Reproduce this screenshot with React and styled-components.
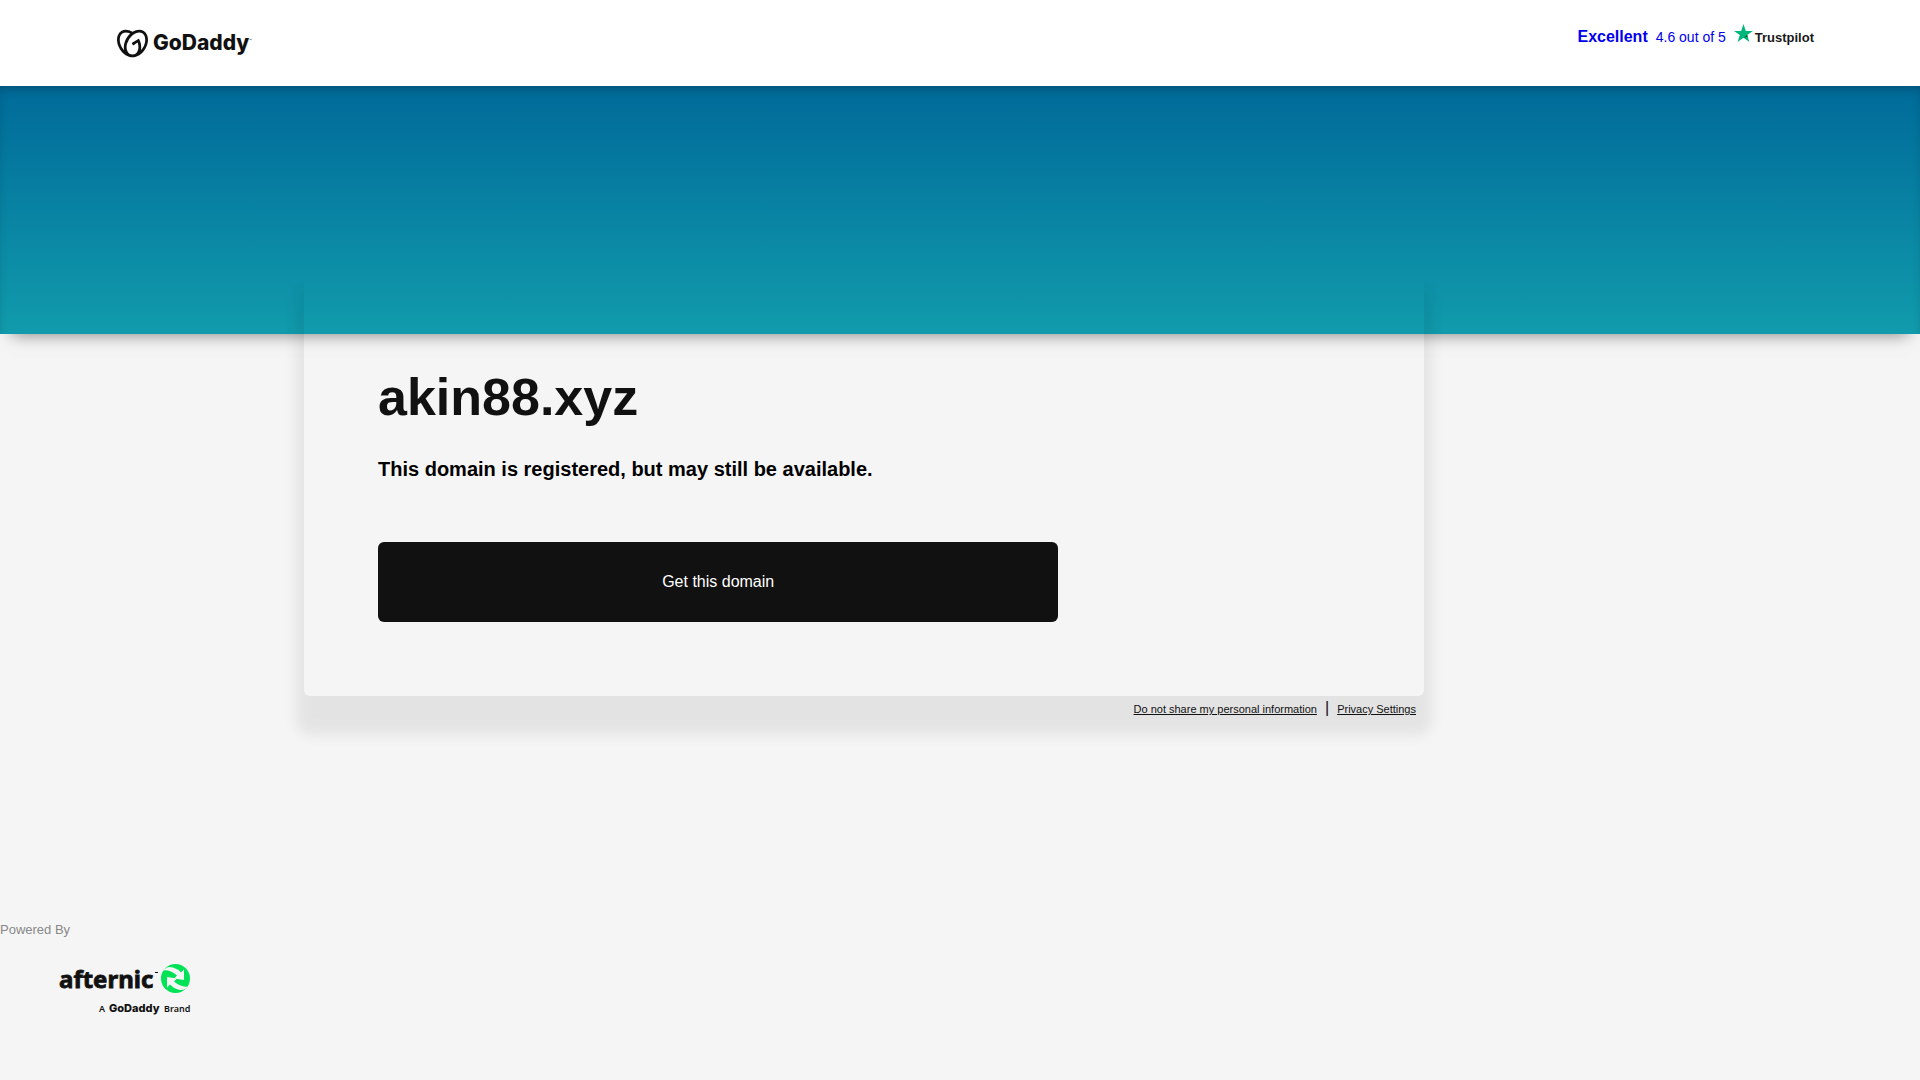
import React from "react";
import styled, { createGlobalStyle } from "styled-components";
import { SiGodaddy } from "react-icons/si";

const GlobalStyle = createGlobalStyle`
  *, *::before, *::after { box-sizing: border-box; }
  body {
    margin: 0;
    background: #f5f5f5;
    color: #111;
    font-family: "Liberation Sans", Arial, Helvetica, sans-serif;
    font-size: 16px;
  }
`;

const Header = styled.header`
  display: flex;
  justify-content: space-between;
  align-items: flex-start;
  height: 86px;
  padding: 24px 106px 0 117px;
  background: #fff;
`;

const Logo = styled.div`
  display: flex;
  align-items: center;
  gap: 5px;
  height: 38px;
  color: #111;
`;

const Wordmark = styled.span`
  font-family: Inter, sans-serif;
  font-size: 21px;
  font-weight: 800;
  line-height: 24px;
`;

const TradeMark = styled.sup`
  font-size: 4px;
  font-weight: 400;
  line-height: 4px;
`;

const Rating = styled.a`
  display: flex;
  align-items: baseline;
  gap: 8px;
  line-height: 24px;
  font-size: 14px;
  color: #0000ee;
  text-decoration: none;

  strong { font-size: 16px; }
`;

const Trustpilot = styled.span`
  display: flex;
  align-items: baseline;
  gap: 2px;
  font-size: 13px;
  font-weight: 700;
  color: #191919;
`;

const Banner = styled.div`
  height: 248px;
  background: linear-gradient(#006a99, #119bac);
  box-shadow: inset 0 6px 12px -5px rgba(0, 0, 0, 0.3), 0 12px 16px -12px rgba(0, 0, 0, 0.5);
`;

const Main = styled.main`
  display: grid;
  grid-template-columns: 19fr 70fr 31fr;
  margin-top: -68px;
`;

const Column = styled.div`
  grid-column: 2;
`;

const Card = styled.section`
  padding: 96px 74px 74px;
  border-radius: 6px;
  box-shadow: 0 31px 14px 8px rgba(0, 0, 0, 0.07);
`;

const Title = styled.h1`
  margin: 0 0 26px;
  font-size: 52px;
  line-height: 70px;
`;

const Subtitle = styled.h2`
  margin: 0 0 62px;
  font-size: 20px;
  line-height: 22px;
  color: #000;
`;

const BuyButton = styled.button`
  display: block;
  width: 70%;
  height: 80px;
  border: 0;
  border-radius: 6px;
  background: #111;
  color: #fff;
  font: inherit;
  cursor: pointer;
`;

const LegalLinks = styled.nav`
  display: flex;
  justify-content: flex-end;
  align-items: baseline;
  gap: 8px;
  padding: 2px 8px;
  line-height: 20px;
`;

const LegalLink = styled.a`
  font-size: 11px;
  color: #111;
`;

const Footer = styled.footer`
  margin-top: 200px;
`;

const PoweredBy = styled.p`
  margin: 0;
  font-size: 13px;
  line-height: 18px;
  color: #888;
`;

const AfternicLogo = styled.svg`
  display: block;
  margin: 16px 0 0 54px;
`;

const ARROW = "M109 15.500Q113 10.500 119 12.500Q124 14 127 17.500L130 14.500V25L120 23.500L123 20.500Q116 14.500 109 15.500Z";

export default function App() {
  return (
    <>
      <GlobalStyle />
      <Header>
        <Logo>
          <SiGodaddy size={31} />
          <Wordmark>GoDaddy<TradeMark>™</TradeMark></Wordmark>
        </Logo>
        <Rating href="#trustpilot">
          <strong>Excellent</strong>
          <span>4.6 out of 5</span>
          <Trustpilot>
            <svg width="19" height="18" viewBox="0 0 19 18" aria-hidden="true">
              <path d="M9.5 0 11.8 6.9H19L13.2 11.1 15.4 18 9.5 13.7 3.6 18 5.8 11.1 0 6.9H7.2Z" fill="#00b67a" />
              <path d="M13.7 12.7 13.2 11.1 9.5 13.7Z" fill="#005128" />
            </svg>
            Trustpilot
          </Trustpilot>
        </Rating>
      </Header>
      <Banner />
      <Main>
        <Column>
          <Card>
            <Title>akin88.xyz</Title>
            <Subtitle>This domain is registered, but may still be available.</Subtitle>
            <BuyButton type="button">Get this domain</BuyButton>
          </Card>
          <LegalLinks>
            <LegalLink href="#do-not-share">Do not share my personal information</LegalLink>
            <span>|</span>
            <LegalLink href="#privacy">Privacy Settings</LegalLink>
          </LegalLinks>
        </Column>
      </Main>
      <Footer>
        <PoweredBy>Powered By</PoweredBy>
        <AfternicLogo width="140" height="66" viewBox="0 0 140 66" fill="#111">
          <text x="5" y="33" fontFamily="Noto Sans, sans-serif" fontWeight="700" fontSize="24" stroke="#111" strokeWidth="0.8">afternic</text>
          <path d="M101 17.500h3" stroke="#111" strokeWidth="1" />
          <circle cx="121.500" cy="23.500" r="14.500" fill="#00e356" />
          <path d={ARROW} fill="#f5f5f5" />
          <path d={ARROW} transform="rotate(180 121.500 23.500)" fill="#f5f5f5" />
          <text x="45" y="57" fontFamily="Noto Sans, sans-serif" fontWeight="600" fontSize="9">A</text>
          <text x="55" y="57" fontFamily="Inter, sans-serif" fontWeight="800" fontSize="11">GoDaddy</text>
          <text x="110" y="57" fontFamily="Noto Sans, sans-serif" fontWeight="600" fontSize="9">Brand</text>
        </AfternicLogo>
      </Footer>
    </>
  );
}
